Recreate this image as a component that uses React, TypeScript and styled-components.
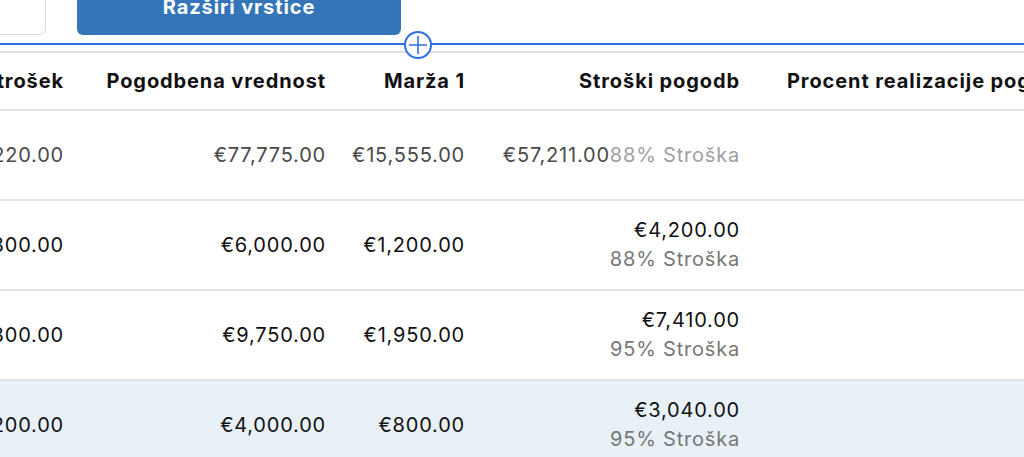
import { useLayoutEffect, useRef } from "react"
import styled, { createGlobalStyle } from "styled-components"

const GlobalStyle = createGlobalStyle`
  html, body {
    margin: 0;
    padding: 0;
    background: #fff;
  }
  body {
    font-family: Inter, "Noto Sans", "Liberation Sans", sans-serif;
    color: #111;
  }
`

type Align = "left" | "right"

type Column = {
  key: string
  title: string
  width: number
  align: Align
  indent?: number
}

type Row = {
  project: string
  planned: string
  contract: string
  margin: string
  costs: string
  share: string
  summary?: boolean
  selected?: boolean
}

const columns: Column[] = [
  { key: "project", title: "Projekt", width: 200, align: "left" },
  { key: "planned", title: "Strošek", width: 178, align: "right" },
  { key: "contract", title: "Pogodbena vrednost", width: 262, align: "right" },
  { key: "margin", title: "Marža 1", width: 139, align: "right" },
  { key: "costs", title: "Stroški pogodb", width: 275, align: "right" },
  {
    key: "realization",
    title: "Procent realizacije pogodbe",
    width: 400,
    align: "left",
    indent: 37,
  },
]

const tableWidth = columns.reduce((sum, c) => sum + c.width, 0)

const rows: Row[] = [
  {
    project: "Skupaj",
    planned: "€62,220.00",
    contract: "€77,775.00",
    margin: "€15,555.00",
    costs: "€57,211.00",
    share: "88% Stroška",
    summary: true,
  },
  {
    project: "Obnova pisarne",
    planned: "€4,800.00",
    contract: "€6,000.00",
    margin: "€1,200.00",
    costs: "€4,200.00",
    share: "88% Stroška",
  },
  {
    project: "Prenova strehe",
    planned: "€7,800.00",
    contract: "€9,750.00",
    margin: "€1,950.00",
    costs: "€7,410.00",
    share: "95% Stroška",
  },
  {
    project: "Ureditev okolice",
    planned: "€3,200.00",
    contract: "€4,000.00",
    margin: "€800.00",
    costs: "€3,040.00",
    share: "95% Stroška",
    selected: true,
  },
  {
    project: "Fasada",
    planned: "€12,000.00",
    contract: "€15,000.00",
    margin: "€3,000.00",
    costs: "€11,400.00",
    share: "95% Stroška",
  },
]

const S = {
  Viewport: styled.div`
    width: 100vw;
    height: 100vh;
    overflow: hidden;
  `,
  Page: styled.div`
    width: max-content;
    display: flex;
    flex-direction: column;
    gap: 16px;
    padding: 16px;
  `,
  Toolbar: styled.div`
    display: flex;
    align-items: flex-start;
    gap: 31px;
  `,
  Search: styled.input`
    width: 350px;
    height: 56px;
    box-sizing: border-box;
    border: 1px solid #dcdcdc;
    border-radius: 6px;
    padding: 0 16px;
    font: 400 18px Inter, sans-serif;
    background: #fff;
  `,
  ExpandButton: styled.button`
    width: 324px;
    height: 56px;
    border: none;
    border-radius: 6px;
    background: #3475b9;
    color: #fff;
    font: 700 20px Inter, sans-serif;
    letter-spacing: 0.9px;
    cursor: pointer;
  `,
  TableArea: styled.div`
    position: relative;
  `,
  InsertLine: styled.div`
    position: absolute;
    left: -16px;
    right: -16px;
    top: -8px;
    height: 2px;
    background: #2f6fe6;
  `,
  InsertHandle: styled.button`
    position: absolute;
    top: -20px;
    left: 708px;
    width: 28px;
    height: 28px;
    box-sizing: border-box;
    padding: 0;
    border: 2px solid #2f6fe6;
    border-radius: 50%;
    background: #fff;
    display: flex;
    align-items: center;
    justify-content: center;
  `,
  Table: styled.table<{ $width: number }>`
    width: ${({ $width }) => $width}px;
    border-collapse: collapse;
    table-layout: fixed;
    border-top: 2px solid #dedede;
  `,
  HeadCell: styled.th<{ $align: Align; $indent?: number }>`
    height: 56px;
    padding: 0 10px 0 ${({ $indent }) => $indent ?? 10}px;
    text-align: ${({ $align }) => $align};
    font-size: 20px;
    font-weight: 700;
    letter-spacing: 0.9px;
    color: #111;
    white-space: nowrap;
    overflow: hidden;
    border-bottom: 2px solid #e2e2e2;
  `,
  Row: styled.tr<{ $selected?: boolean }>`
    background: ${({ $selected }) => ($selected ? "#e8f0f8" : "#fff")};
    border-bottom: 2px solid #e2e2e2;
  `,
  Cell: styled.td<{ $align: Align; $muted?: boolean }>`
    height: 88px;
    padding: 0 10px;
    text-align: ${({ $align }) => $align};
    vertical-align: middle;
    font-size: 20px;
    letter-spacing: 0.8px;
    line-height: 29px;
    color: ${({ $muted }) => ($muted ? "#4a4a4a" : "#111")};
    white-space: nowrap;
    overflow: hidden;
  `,
  Share: styled.span<{ $inline?: boolean }>`
    display: ${({ $inline }) => ($inline ? "inline" : "block")};
    color: ${({ $inline }) => ($inline ? "#a0a0a0" : "#777")};
  `,
}

const PlusIcon = () => (
  <svg width="18" height="18" viewBox="0 0 18 18" fill="none">
    <path d="M9 0v18M0 9h18" stroke="#2f6fe6" strokeWidth="1.6" />
  </svg>
)

export default function App() {
  const viewportRef = useRef<HTMLDivElement>(null)

  // the table is wide, the view is scrolled to the cost columns
  useLayoutEffect(() => {
    const el = viewportRef.current
    if (!el) return
    el.scrollLeft = 320
    el.scrollTop = 37
  }, [])

  return (
    <>
      <GlobalStyle />
      <S.Viewport ref={viewportRef}>
        <S.Page>
          <S.Toolbar>
            <S.Search placeholder="Iskanje" />
            <S.ExpandButton>Razširi vrstice</S.ExpandButton>
          </S.Toolbar>
          <S.TableArea>
            <S.InsertLine />
            <S.InsertHandle aria-label="Dodaj vrstico">
              <PlusIcon />
            </S.InsertHandle>
            <S.Table $width={tableWidth}>
              <colgroup>
                {columns.map((c) => (
                  <col key={c.key} style={{ width: c.width }} />
                ))}
              </colgroup>
              <thead>
                <tr>
                  {columns.map((c) => (
                    <S.HeadCell key={c.key} $align={c.align} $indent={c.indent}>
                      {c.title}
                    </S.HeadCell>
                  ))}
                </tr>
              </thead>
              <tbody>
                {rows.map((r) => (
                  <S.Row key={r.project} $selected={r.selected}>
                    <S.Cell $align="left" $muted={r.summary}>
                      {r.project}
                    </S.Cell>
                    <S.Cell $align="right" $muted={r.summary}>
                      {r.planned}
                    </S.Cell>
                    <S.Cell $align="right" $muted={r.summary}>
                      {r.contract}
                    </S.Cell>
                    <S.Cell $align="right" $muted={r.summary}>
                      {r.margin}
                    </S.Cell>
                    <S.Cell $align="right" $muted={r.summary}>
                      {r.costs}
                      <S.Share $inline={r.summary}>{r.share}</S.Share>
                    </S.Cell>
                    <S.Cell $align="left" />
                  </S.Row>
                ))}
              </tbody>
            </S.Table>
          </S.TableArea>
        </S.Page>
      </S.Viewport>
    </>
  )
}
